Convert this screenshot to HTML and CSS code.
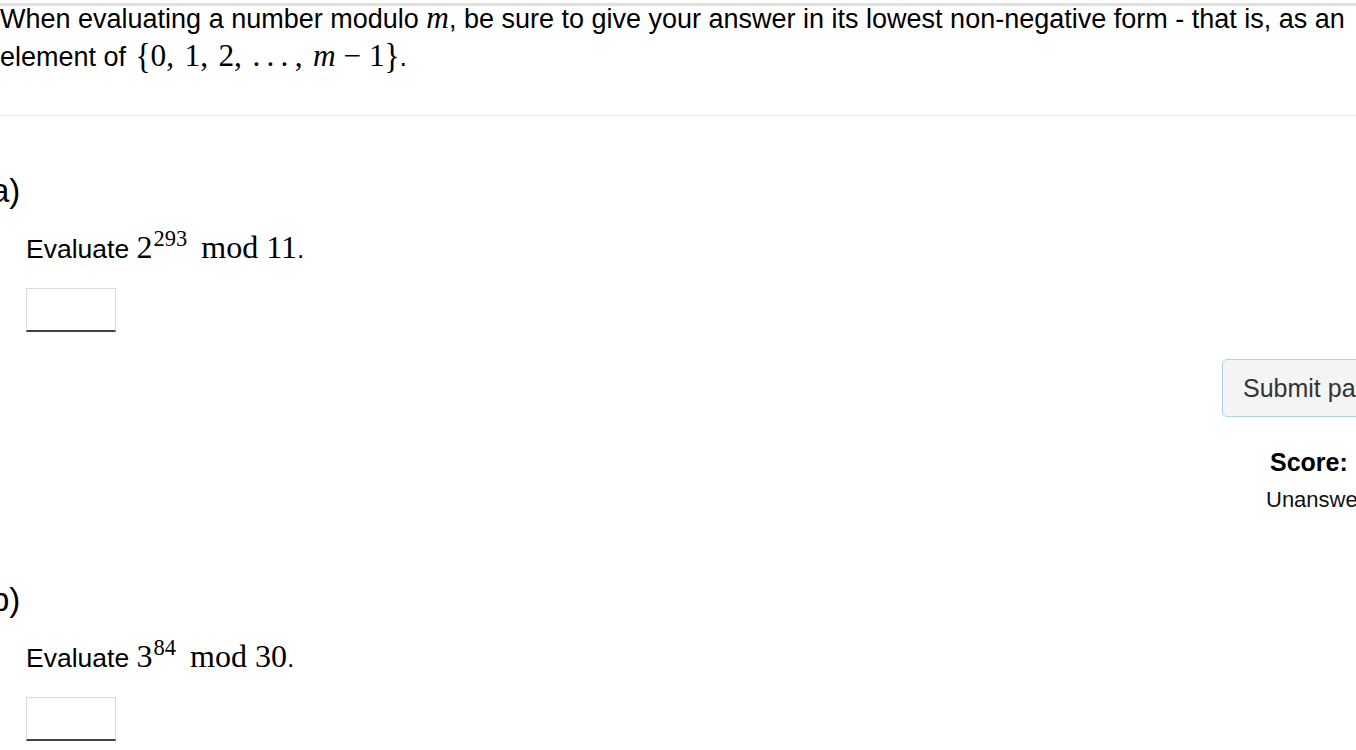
FILE: index.html
```html
<!DOCTYPE html>
<html lang="en">
<head>
<meta charset="utf-8">
<title>Modular arithmetic</title>
<link rel="stylesheet" href="styles.css">
</head>
<body>
<div class="page">
  <div class="topbar"></div>
  <p class="intro">When evaluating a number modulo <span class="math"><i>m</i></span>, be sure to give your answer in its lowest non-negative form - that is, as an element of <span class="math set"><span class="brace">{</span>0,&#8196;1,&#8196;2,&#8196;.&#8201;.&#8201;.&#8201;,&#8196;<i>m</i>&#8197;−&#8197;1<span class="brace">}</span></span>.</p>
  <hr class="sep">

  <section class="part">
    <h3 class="part-label">a)</h3>
    <div class="part-body">
      <p class="question">Evaluate <span class="math">2<sup>293</sup> <span class="op">mod</span> 11</span>.</p>
      <input class="answer" type="text" aria-label="Answer a">
    </div>
    <div class="part-footer">
      <div class="submit-area">
        <button class="submit-btn" type="button">Submit part</button>
        <div class="score-label">Score:</div>
        <div class="score-status">Unanswered</div>
      </div>
    </div>
  </section>

  <section class="part">
    <h3 class="part-label">b)</h3>
    <div class="part-body">
      <p class="question">Evaluate <span class="math">3<sup>84</sup> <span class="op">mod</span> 30</span>.</p>
      <input class="answer" type="text" aria-label="Answer b">
    </div>
  </section>
</div>
</body>
</html>
```

FILE: styles.css
```css
html, body {
  margin: 0;
  padding: 0;
  background: #ffffff;
}

body {
  font-family: "Liberation Sans", Arial, sans-serif;
  color: #000000;
  overflow: hidden;
  width: 1356px;
  height: 750px;
}

.page {
  width: 1356px;
}

.topbar {
  margin-top: 3px;
  height: 3px;
  background: #e0e0e0;
  width: 1380px;
}

.intro {
  margin: -6px 0 0 0;
  width: 1370px;
  font-size: 27px;
  line-height: 38px;
}

.intro .math {
  font-size: 1.16em;
}

.math {
  font-family: "Liberation Serif", "Times New Roman", serif;
  font-size: 1.21em;
  line-height: 1;
}

.math i {
  font-style: italic;
}

.math.set {
  margin-left: 2px;
}

.brace {
  display: inline-block;
  transform: scaleY(1.15);
}

.math sup {
  font-size: 0.7em;
  line-height: 0;
  vertical-align: baseline;
  position: relative;
  top: -0.52em;
  margin-left: 1px;
}

.math .op {
  margin-left: 6px;
}

.sep {
  margin: 39px 0 0 0;
  border: 0;
  border-top: 1px solid #ececec;
  height: 0;
  width: 1380px;
}

.part {
  display: flex;
  flex-direction: column;
}

.sep + .part {
  margin-top: 55px;
}

.part-label {
  margin: 0 0 0 -9px;
  font-size: 33px;
  font-weight: normal;
  line-height: 40px;
  height: 40px;
}

.part-body {
  padding-left: 26px;
  display: flex;
  flex-direction: column;
  align-items: flex-start;
}

.question {
  margin: 20px 0 0 0;
  font-size: 26.5px;
  line-height: 36px;
  height: 36px;
}

.answer {
  margin-top: 21px;
  box-sizing: border-box;
  width: 90px;
  height: 44px;
  border: 1px solid #dadada;
  border-bottom: 2px solid #3c4448;
  border-radius: 0;
  background: #ffffff;
  padding: 0 6px;
  font-size: 22px;
  font-family: "Liberation Sans", Arial, sans-serif;
}

.part-footer {
  display: flex;
  justify-content: flex-end;
  margin-top: 27px;
}

.submit-area {
  width: 190px;
  margin-right: -56px;
  display: flex;
  flex-direction: column;
  align-items: flex-start;
  margin-bottom: 65px;
}

.submit-btn {
  box-sizing: border-box;
  height: 58px;
  padding: 0 20px;
  border: 1px solid #a9d4f0;
  border-radius: 5px;
  background: #f4f4f4;
  color: #333333;
  font-family: "Liberation Sans", Arial, sans-serif;
  font-size: 25px;
  white-space: nowrap;
}

.score-label {
  margin-top: 30px;
  padding-left: 48px;
  font-size: 25px;
  font-weight: bold;
  line-height: 30px;
}

.score-status {
  margin-top: 8px;
  padding-left: 44px;
  font-size: 22px;
  line-height: 30px;
  color: #111111;
}
```
